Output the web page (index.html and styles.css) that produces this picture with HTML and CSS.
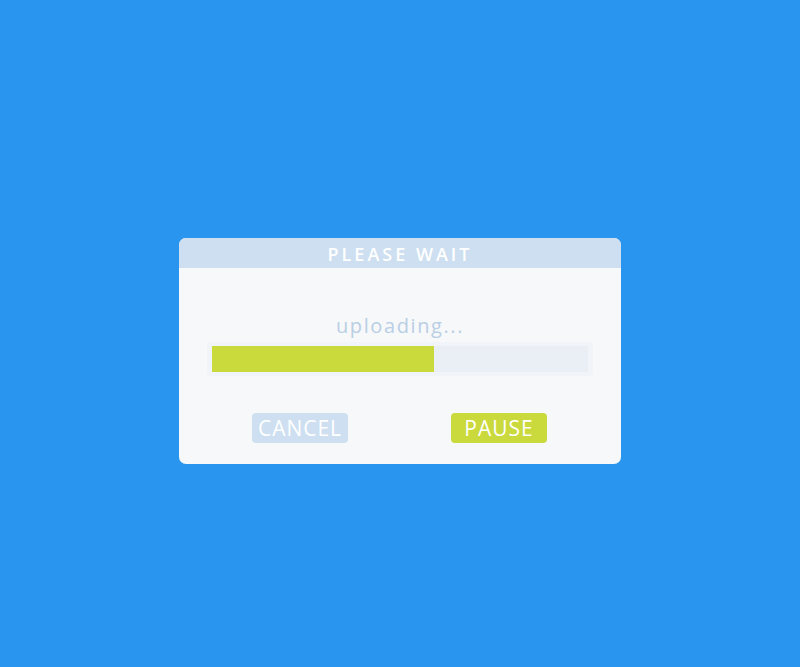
FILE: index.html
```html
<!DOCTYPE html>
<html>
    <head>
        <title>Please Wait</title>
        <link rel="stylesheet" href="styles.css">
    </head>
    <body>
        <main class="dialog">
            <p class="dialog-title">PLEASE WAIT</p>
            <div class="dialog-body">
                <p class="status-text">uploading...</p>
                <div class="progress-outer">
                    <div class="progress-track">
                        <div class="progress-bar" style="width: 59%;"></div>
                    </div>
                </div>
                <div class="button-row">
                    <button class="dialog-button cancel-button">CANCEL</button>
                    <button class="dialog-button pause-button">PAUSE</button>
                </div>
            </div>
        </main>
    </body>
</html>
```

FILE: styles.css
```css
body {
    margin: 0;
    padding-top: 238px;
    height: 667px;
    box-sizing: border-box;
    background-color: #2a95ef;
    font-family: "Open Sans", Arial, sans-serif;
}

.dialog {
    width: 442px;
    margin: 0 auto;
    background-color: #f7f8f9;
    border-radius: 7px;
    overflow: hidden;
}

.dialog-title {
    margin: 0;
    height: 30px;
    line-height: 33px;
    background-color: #cddff0;
    color: white;
    text-align: center;
    font-size: 18px;
    font-weight: 600;
    letter-spacing: 3px;
}

.dialog-body {
    padding: 46px 28px 21px 28px;
}

.status-text {
    margin: 0 0 4px 0;
    height: 24px;
    line-height: 24px;
    text-align: center;
    color: #b9cfe5;
    font-size: 20px;
    letter-spacing: 1.6px;
}

.progress-outer {
    padding: 4px 5px;
    background-color: #f1f4f8;
    border-radius: 2px;
}

.progress-track {
    height: 26px;
    background-color: #eaeff6;
}

.progress-bar {
    height: 100%;
    background-color: #cad93b;
}

.button-row {
    display: flex;
    justify-content: space-between;
    margin-top: 37px;
    padding: 0 46px 0 45px;
}

.dialog-button {
    width: 96px;
    height: 30px;
    padding: 0;
    border-style: none;
    border-radius: 4px;
    color: white;
    font-family: "Open Sans", Arial, sans-serif;
    font-size: 21px;
    letter-spacing: 1px;
    cursor: pointer;
}

.cancel-button {
    background-color: #cddff0;
}

.pause-button {
    background-color: #cad93b;
}
```
